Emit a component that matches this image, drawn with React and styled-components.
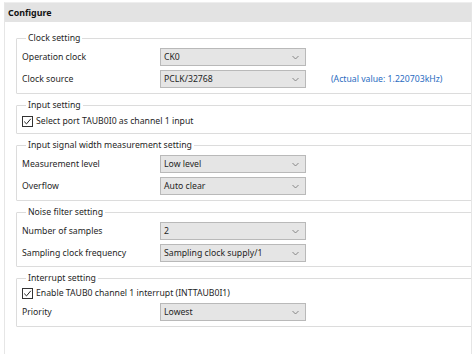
import React from 'react';
import styled, { createGlobalStyle } from 'styled-components';

const GlobalStyle = createGlobalStyle`
  html, body {
    margin: 0;
    padding: 0;
    background: #ffffff;
    overflow: hidden;
  }
  body {
    font-family: "Noto Sans", "Open Sans", sans-serif;
    font-size: 8.7px;
    color: #1f1f1f;
  }
`;

const Panel = styled.div`
  margin: 2px 0 0 4px;
  width: 468px;
  height: 352px;
  border-left: 1px solid #e6e6e6;
  border-right: 1px solid #e6e6e6;
  border-top: 1px solid #eeeeee;
  box-sizing: border-box;
  overflow: hidden;
`;

const Header = styled.div`
  height: 19px;
  background: #e3e3e3;
  display: flex;
  align-items: center;
  padding-left: 3px;
  font-weight: bold;
  font-size: 8.9px;
  color: #111;
`;

const Body = styled.div`
  padding: 9px 0 0 11px;
  display: flex;
  flex-direction: column;
  gap: 4px;
`;

const Group = styled.fieldset`
  margin: 0 -20px 0 0;
  padding: 0 0 ${(p) => p.$bottom || 5}px 5px;
  border: 1px solid #dcdcdc;
  border-radius: 1px;
  display: flex;
  flex-direction: column;
  gap: ${(p) => p.$gap || 4}px;
`;

const Legend = styled.legend`
  margin-left: 4px;
  padding: 0 2px;
  line-height: 14px;
  color: #1f1f1f;
`;

const Row = styled.div`
  display: flex;
  align-items: center;
  height: 18px;
  margin-top: ${(p) => p.$top || 0}px;
`;

const Label = styled.div`
  width: 138px;
  flex: none;
`;

const Select = styled.div`
  width: 146px;
  height: 18px;
  box-sizing: border-box;
  border: 1px solid #b9b9b9;
  background: #e5e5e5;
  display: flex;
  align-items: center;
  justify-content: space-between;
  padding: 0 6px 0 3px;
  color: #1f1f1f;
`;

const Chevron = styled.svg`
  width: 7px;
  height: 5px;
`;

const Note = styled.div`
  margin-left: 25px;
  color: #2a6cbf;
`;

const CheckRow = styled.label`
  display: flex;
  align-items: center;
  gap: 3px;
  height: 14px;
  margin-top: ${(p) => p.$top || 0}px;
`;

const Box = styled.span`
  width: 11px;
  height: 11px;
  box-sizing: border-box;
  border: 1px solid #333;
  background: #fff;
  display: flex;
  align-items: center;
  justify-content: center;
`;

function Dropdown({ value }) {
  return (
    <Select>
      <span>{value}</span>
      <Chevron viewBox="0 0 7 5">
        <path d="M0.5 1 L3.5 4 L6.5 1" fill="none" stroke="#7a7a7a" strokeWidth="0.9" />
      </Chevron>
    </Select>
  );
}

function Field({ label, value, note, top }) {
  return (
    <Row $top={top}>
      <Label>{label}</Label>
      <Dropdown value={value} />
      {note && <Note>{note}</Note>}
    </Row>
  );
}

function Check({ text, top }) {
  return (
    <CheckRow $top={top}>
      <Box>
        <svg width="9" height="9" viewBox="0 0 9 9">
          <path d="M1.2 4.6 L3.5 6.9 L7.8 1.8" fill="none" stroke="#222" strokeWidth="1" />
        </svg>
      </Box>
      <span>{text}</span>
    </CheckRow>
  );
}

export default function App() {
  return (
    <>
      <GlobalStyle />
      <Panel>
        <Header>Configure</Header>
        <Body>
          <Group>
            <Legend>Clock setting</Legend>
            <Field label="Operation clock" value="CK0" top={3} />
            <Field label="Clock source" value="PCLK/32768" note="(Actual value: 1.220703kHz)" />
          </Group>
          <Group>
            <Legend>Input setting</Legend>
            <Check text="Select port TAUB0I0 as channel 1 input" top={2} />
          </Group>
          <Group>
            <Legend>Input signal width measurement setting</Legend>
            <Field label="Measurement level" value="Low level" top={3} />
            <Field label="Overflow" value="Auto clear" />
          </Group>
          <Group $bottom={4}>
            <Legend>Noise filter setting</Legend>
            <Field label="Number of samples" value="2" top={3} />
            <Field label="Sampling clock frequency" value="Sampling clock supply/1" />
          </Group>
          <Group $gap={3}>
            <Legend>Interrupt setting</Legend>
            <Check text="Enable TAUB0 channel 1 interrupt (INTTAUB0I1)" top={1} />
            <Field label="Priority" value="Lowest" />
          </Group>
        </Body>
      </Panel>
    </>
  );
}
